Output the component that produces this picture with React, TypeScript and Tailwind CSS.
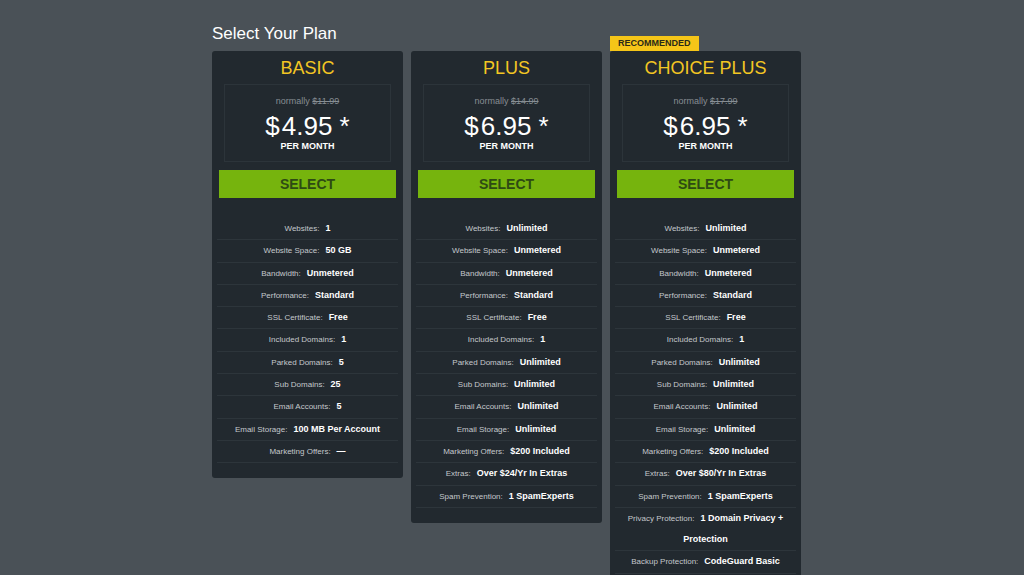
import React from 'react';

interface Feature {
  label: string;
  value: string;
}

interface Plan {
  name: string;
  normally: string;
  price: string;
  recommended?: boolean;
  features: Feature[];
}

const plans: Plan[] = [
  {
    name: 'BASIC',
    normally: '$11.99',
    price: '4.95',
    features: [
      { label: 'Websites:', value: '1' },
      { label: 'Website Space:', value: '50 GB' },
      { label: 'Bandwidth:', value: 'Unmetered' },
      { label: 'Performance:', value: 'Standard' },
      { label: 'SSL Certificate:', value: 'Free' },
      { label: 'Included Domains:', value: '1' },
      { label: 'Parked Domains:', value: '5' },
      { label: 'Sub Domains:', value: '25' },
      { label: 'Email Accounts:', value: '5' },
      { label: 'Email Storage:', value: '100 MB Per Account' },
      { label: 'Marketing Offers:', value: '—' },
    ],
  },
  {
    name: 'PLUS',
    normally: '$14.99',
    price: '6.95',
    features: [
      { label: 'Websites:', value: 'Unlimited' },
      { label: 'Website Space:', value: 'Unmetered' },
      { label: 'Bandwidth:', value: 'Unmetered' },
      { label: 'Performance:', value: 'Standard' },
      { label: 'SSL Certificate:', value: 'Free' },
      { label: 'Included Domains:', value: '1' },
      { label: 'Parked Domains:', value: 'Unlimited' },
      { label: 'Sub Domains:', value: 'Unlimited' },
      { label: 'Email Accounts:', value: 'Unlimited' },
      { label: 'Email Storage:', value: 'Unlimited' },
      { label: 'Marketing Offers:', value: '$200 Included' },
      { label: 'Extras:', value: 'Over $24/Yr In Extras' },
      { label: 'Spam Prevention:', value: '1 SpamExperts' },
    ],
  },
  {
    name: 'CHOICE PLUS',
    normally: '$17.99',
    price: '6.95',
    recommended: true,
    features: [
      { label: 'Websites:', value: 'Unlimited' },
      { label: 'Website Space:', value: 'Unmetered' },
      { label: 'Bandwidth:', value: 'Unmetered' },
      { label: 'Performance:', value: 'Standard' },
      { label: 'SSL Certificate:', value: 'Free' },
      { label: 'Included Domains:', value: '1' },
      { label: 'Parked Domains:', value: 'Unlimited' },
      { label: 'Sub Domains:', value: 'Unlimited' },
      { label: 'Email Accounts:', value: 'Unlimited' },
      { label: 'Email Storage:', value: 'Unlimited' },
      { label: 'Marketing Offers:', value: '$200 Included' },
      { label: 'Extras:', value: 'Over $80/Yr In Extras' },
      { label: 'Spam Prevention:', value: '1 SpamExperts' },
      { label: 'Privacy Protection:', value: '1 Domain Privacy + Protection' },
      { label: 'Backup Protection:', value: 'CodeGuard Basic' },
    ],
  },
];

const PlanCard: React.FC<{ plan: Plan }> = ({ plan }) => (
  <div className="relative w-[191px] shrink-0 rounded-[3px] bg-[#22292f] px-[4px] pt-[6px] pb-[15px]">
    {plan.recommended && (
      <div className="absolute -top-[15px] left-0 h-[15px] bg-[#f5c518] px-[8px] text-[9px] font-bold leading-[15px] text-[#2a2a1a]">
        RECOMMENDED
      </div>
    )}
    <h3 className="text-center text-[18px] leading-[22px] text-[#f3c623]">{plan.name}</h3>
    <div className="mx-[8px] mt-[5px] flex h-[78px] flex-col items-center border border-[#2c343a] pt-[10px]">
      <div className="text-[9px] leading-[12px] text-[#868d93]">
        normally <span className="line-through">{plan.normally}</span>
      </div>
      <div className="mt-[4px] text-[26px] leading-[30px] text-white">
        $<span className="ml-[2px]">{plan.price}</span> *
      </div>
      <div className="text-[9px] font-bold leading-[11px] text-white">PER MONTH</div>
    </div>
    <button className="mx-[3px] mt-[8px] h-[28px] w-[177px] bg-[#76b40d] text-[14px] font-bold text-[#2e4a14]">
      SELECT
    </button>
    <ul className="mt-[20px] px-[1px]">
      {plan.features.map((f) => (
        <li
          key={f.label}
          className="border-b border-[#2d353b] px-[6px] text-center text-[9px] leading-[21.3px]"
        >
          <span className="text-[8px] leading-[10px] text-[#c4c8cc]">{f.label}</span>
          <span className="ml-[6px] font-bold text-white">{f.value}</span>
        </li>
      ))}
    </ul>
  </div>
);

export default function App() {
  return (
    <div className="min-h-[575px] bg-[#4a5157] font-['Liberation_Sans',Arial,sans-serif]">
      <div className="mx-auto w-[600px] pt-[24px]">
        <h1 className="text-[17px] leading-[20px] text-white">Select Your Plan</h1>
        <div className="mt-[7px] flex items-start gap-[8px]">
          {plans.map((p) => (
            <PlanCard key={p.name} plan={p} />
          ))}
        </div>
      </div>
    </div>
  );
}
